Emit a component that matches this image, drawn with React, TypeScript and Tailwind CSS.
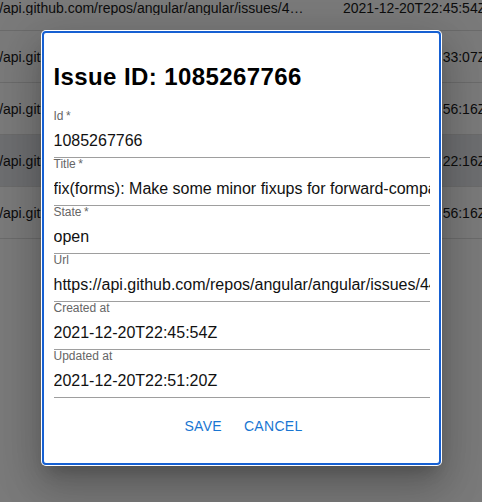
import React from "react";

const rows = [
  { url: "https://api.github.com/repos/angular/angular/issues/44536", created: "2021-12-20T22:45:54Z" },
  { url: "https://api.github.com/repos/angular/angular/issues/44535", created: "2021-12-20T21:33:07Z" },
  { url: "https://api.github.com/repos/angular/angular/issues/44534", created: "2021-12-20T20:56:16Z" },
  { url: "https://api.github.com/repos/angular/angular/issues/44533", created: "2021-12-20T19:22:16Z", selected: true },
  { url: "https://api.github.com/repos/angular/angular/issues/44532", created: "2021-12-20T18:56:16Z" },
];

const fields = [
  { label: "Id", required: true, value: "1085267766" },
  { label: "Title", required: true, value: "fix(forms): Make some minor fixups for forward-compatibility with typed forms" },
  { label: "State", required: true, value: "open" },
  { label: "Url", required: false, value: "https://api.github.com/repos/angular/angular/issues/44536" },
  { label: "Created at", required: false, value: "2021-12-20T22:45:54Z" },
  { label: "Updated at", required: false, value: "2021-12-20T22:51:20Z" },
];

export default function App() {
  return (
    <div className="relative h-[502px] w-[482px] overflow-hidden bg-white font-['Liberation_Sans',Arial,sans-serif]">
      <div className="-ml-[55px] w-[700px] text-[14px] text-[#1a1a1a]">
        {rows.map((r, i) => (
          <div
            key={r.url}
            className={`flex border-b border-[#e0e0e0] ${i === 0 ? "h-[31px] items-start pt-px leading-[14px]" : "h-[52px] items-center leading-5"} ${r.selected ? "bg-[#e4e7eb]" : ""}`}
          >
            <div className="w-[382px] shrink-0 truncate px-4">{r.url}</div>
            <div className="whitespace-nowrap px-4">{r.created}</div>
          </div>
        ))}
      </div>

      <div className="absolute inset-0 flex justify-center bg-black/[0.52] pt-[30px]">
        <div className="h-[436px] w-[401px] rounded-[5px] bg-white p-px shadow-[0_11px_15px_-7px_rgba(0,0,0,0.2),0_24px_38px_3px_rgba(0,0,0,0.14),0_9px_46px_8px_rgba(0,0,0,0.12)]">
          <div className="flex h-full flex-col rounded-[4px] border-2 border-[#1660d2] pl-[10px] pr-[9px]">
            <h2 className="mb-[19px] pt-[30px] text-[24px] font-bold leading-[28px] tracking-[0.4px] text-black">
              Issue ID: 1085267766
            </h2>
            {fields.map((f) => (
              <div key={f.label}>
                <div className="h-[13px] text-[12px] leading-[13px] text-[#666]">
                  {f.label}
                  {f.required ? "\u2009*" : ""}
                </div>
                <div className="overflow-hidden whitespace-nowrap border-b border-[#9e9e9e] pb-[4px] pt-[6px] text-[16px] leading-6 text-[#111]">
                  {f.value}
                </div>
              </div>
            ))}
            <div className="ml-[4px] mt-[18px] flex justify-center gap-[22px] text-[14px] leading-5 text-[#1976d2]">
              <button type="button" className="uppercase tracking-[0.3px]">SAVE</button>
              <button type="button" className="uppercase tracking-[0.3px]">CANCEL</button>
            </div>
          </div>
        </div>
      </div>
    </div>
  );
}
